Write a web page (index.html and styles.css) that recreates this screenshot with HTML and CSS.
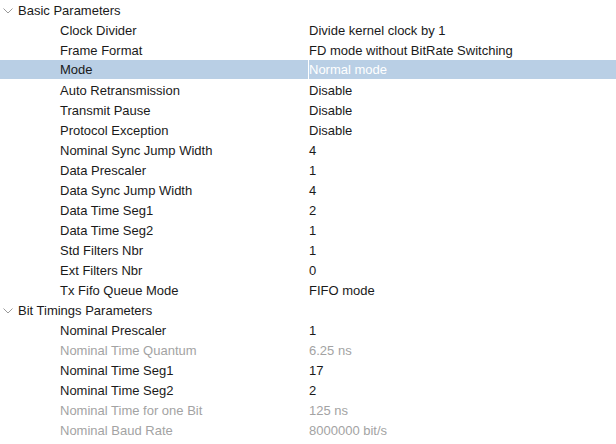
FILE: index.html
```html
<!DOCTYPE html>
<html>
<head>
<meta charset="utf-8">
<link rel="stylesheet" href="styles.css">
</head>
<body>
<div class="tree">
  <div class="group"><svg class="chev" viewBox="0 0 10 6" width="10" height="6"><path d="M0.5 0.5 L5 5 L9.5 0.5" fill="none" stroke="#9a9a9a" stroke-width="1"/></svg><span>Basic Parameters</span></div>
  <div class="row"><span class="name">Clock Divider</span><span class="val">Divide kernel clock by 1</span></div>
  <div class="row"><span class="name">Frame Format</span><span class="val">FD mode without BitRate Switching</span></div>
  <div class="row sel"><span class="name">Mode</span><span class="val">Normal mode</span></div>
  <div class="row"><span class="name">Auto Retransmission</span><span class="val">Disable</span></div>
  <div class="row"><span class="name">Transmit Pause</span><span class="val">Disable</span></div>
  <div class="row"><span class="name">Protocol Exception</span><span class="val">Disable</span></div>
  <div class="row"><span class="name">Nominal Sync Jump Width</span><span class="val">4</span></div>
  <div class="row"><span class="name">Data Prescaler</span><span class="val">1</span></div>
  <div class="row"><span class="name">Data Sync Jump Width</span><span class="val">4</span></div>
  <div class="row"><span class="name">Data Time Seg1</span><span class="val">2</span></div>
  <div class="row"><span class="name">Data Time Seg2</span><span class="val">1</span></div>
  <div class="row"><span class="name">Std Filters Nbr</span><span class="val">1</span></div>
  <div class="row"><span class="name">Ext Filters Nbr</span><span class="val">0</span></div>
  <div class="row"><span class="name">Tx Fifo Queue Mode</span><span class="val">FIFO mode</span></div>
  <div class="group"><svg class="chev" viewBox="0 0 10 6" width="10" height="6"><path d="M0.5 0.5 L5 5 L9.5 0.5" fill="none" stroke="#9a9a9a" stroke-width="1"/></svg><span>Bit Timings Parameters</span></div>
  <div class="row"><span class="name">Nominal Prescaler</span><span class="val">1</span></div>
  <div class="row dis"><span class="name">Nominal Time Quantum</span><span class="val">6.25 ns</span></div>
  <div class="row"><span class="name">Nominal Time Seg1</span><span class="val">17</span></div>
  <div class="row"><span class="name">Nominal Time Seg2</span><span class="val">2</span></div>
  <div class="row dis"><span class="name">Nominal Time for one Bit</span><span class="val">125 ns</span></div>
  <div class="row dis"><span class="name">Nominal Baud Rate</span><span class="val">8000000 bit/s</span></div>
</div>
</body>
</html>
```
FILE: styles.css
```css
html, body {
  margin: 0;
  padding: 0;
  background: #ffffff;
}
body {
  font-family: "Liberation Sans", Arial, sans-serif;
  font-size: 13px;
  color: #1a1a1a;
}
.tree {
  display: flex;
  flex-direction: column;
}
.group {
  height: 20px;
  display: flex;
  align-items: center;
  padding-left: 3px;
}
.group .chev {
  margin-right: 5px;
  margin-top: 1px;
}
.row {
  height: 20px;
  display: grid;
  grid-template-columns: 308px 1fr;
  align-items: center;
}
.row .name {
  padding-left: 60px;
}
.row .val {
  padding-left: 1px;
  height: 100%;
  display: flex;
  align-items: center;
}
.row.sel {
  background: #b9cfe5;
  color: #ffffff;
  height: 19px;
  margin-bottom: 1px;
}
.row.sel .name {
  color: #1a1a1a;
}
.row.sel .val {
  border-left: 1px solid #ffffff;
  padding-left: 0;
}
.row.dis {
  color: #a3a3a3;
}
```
